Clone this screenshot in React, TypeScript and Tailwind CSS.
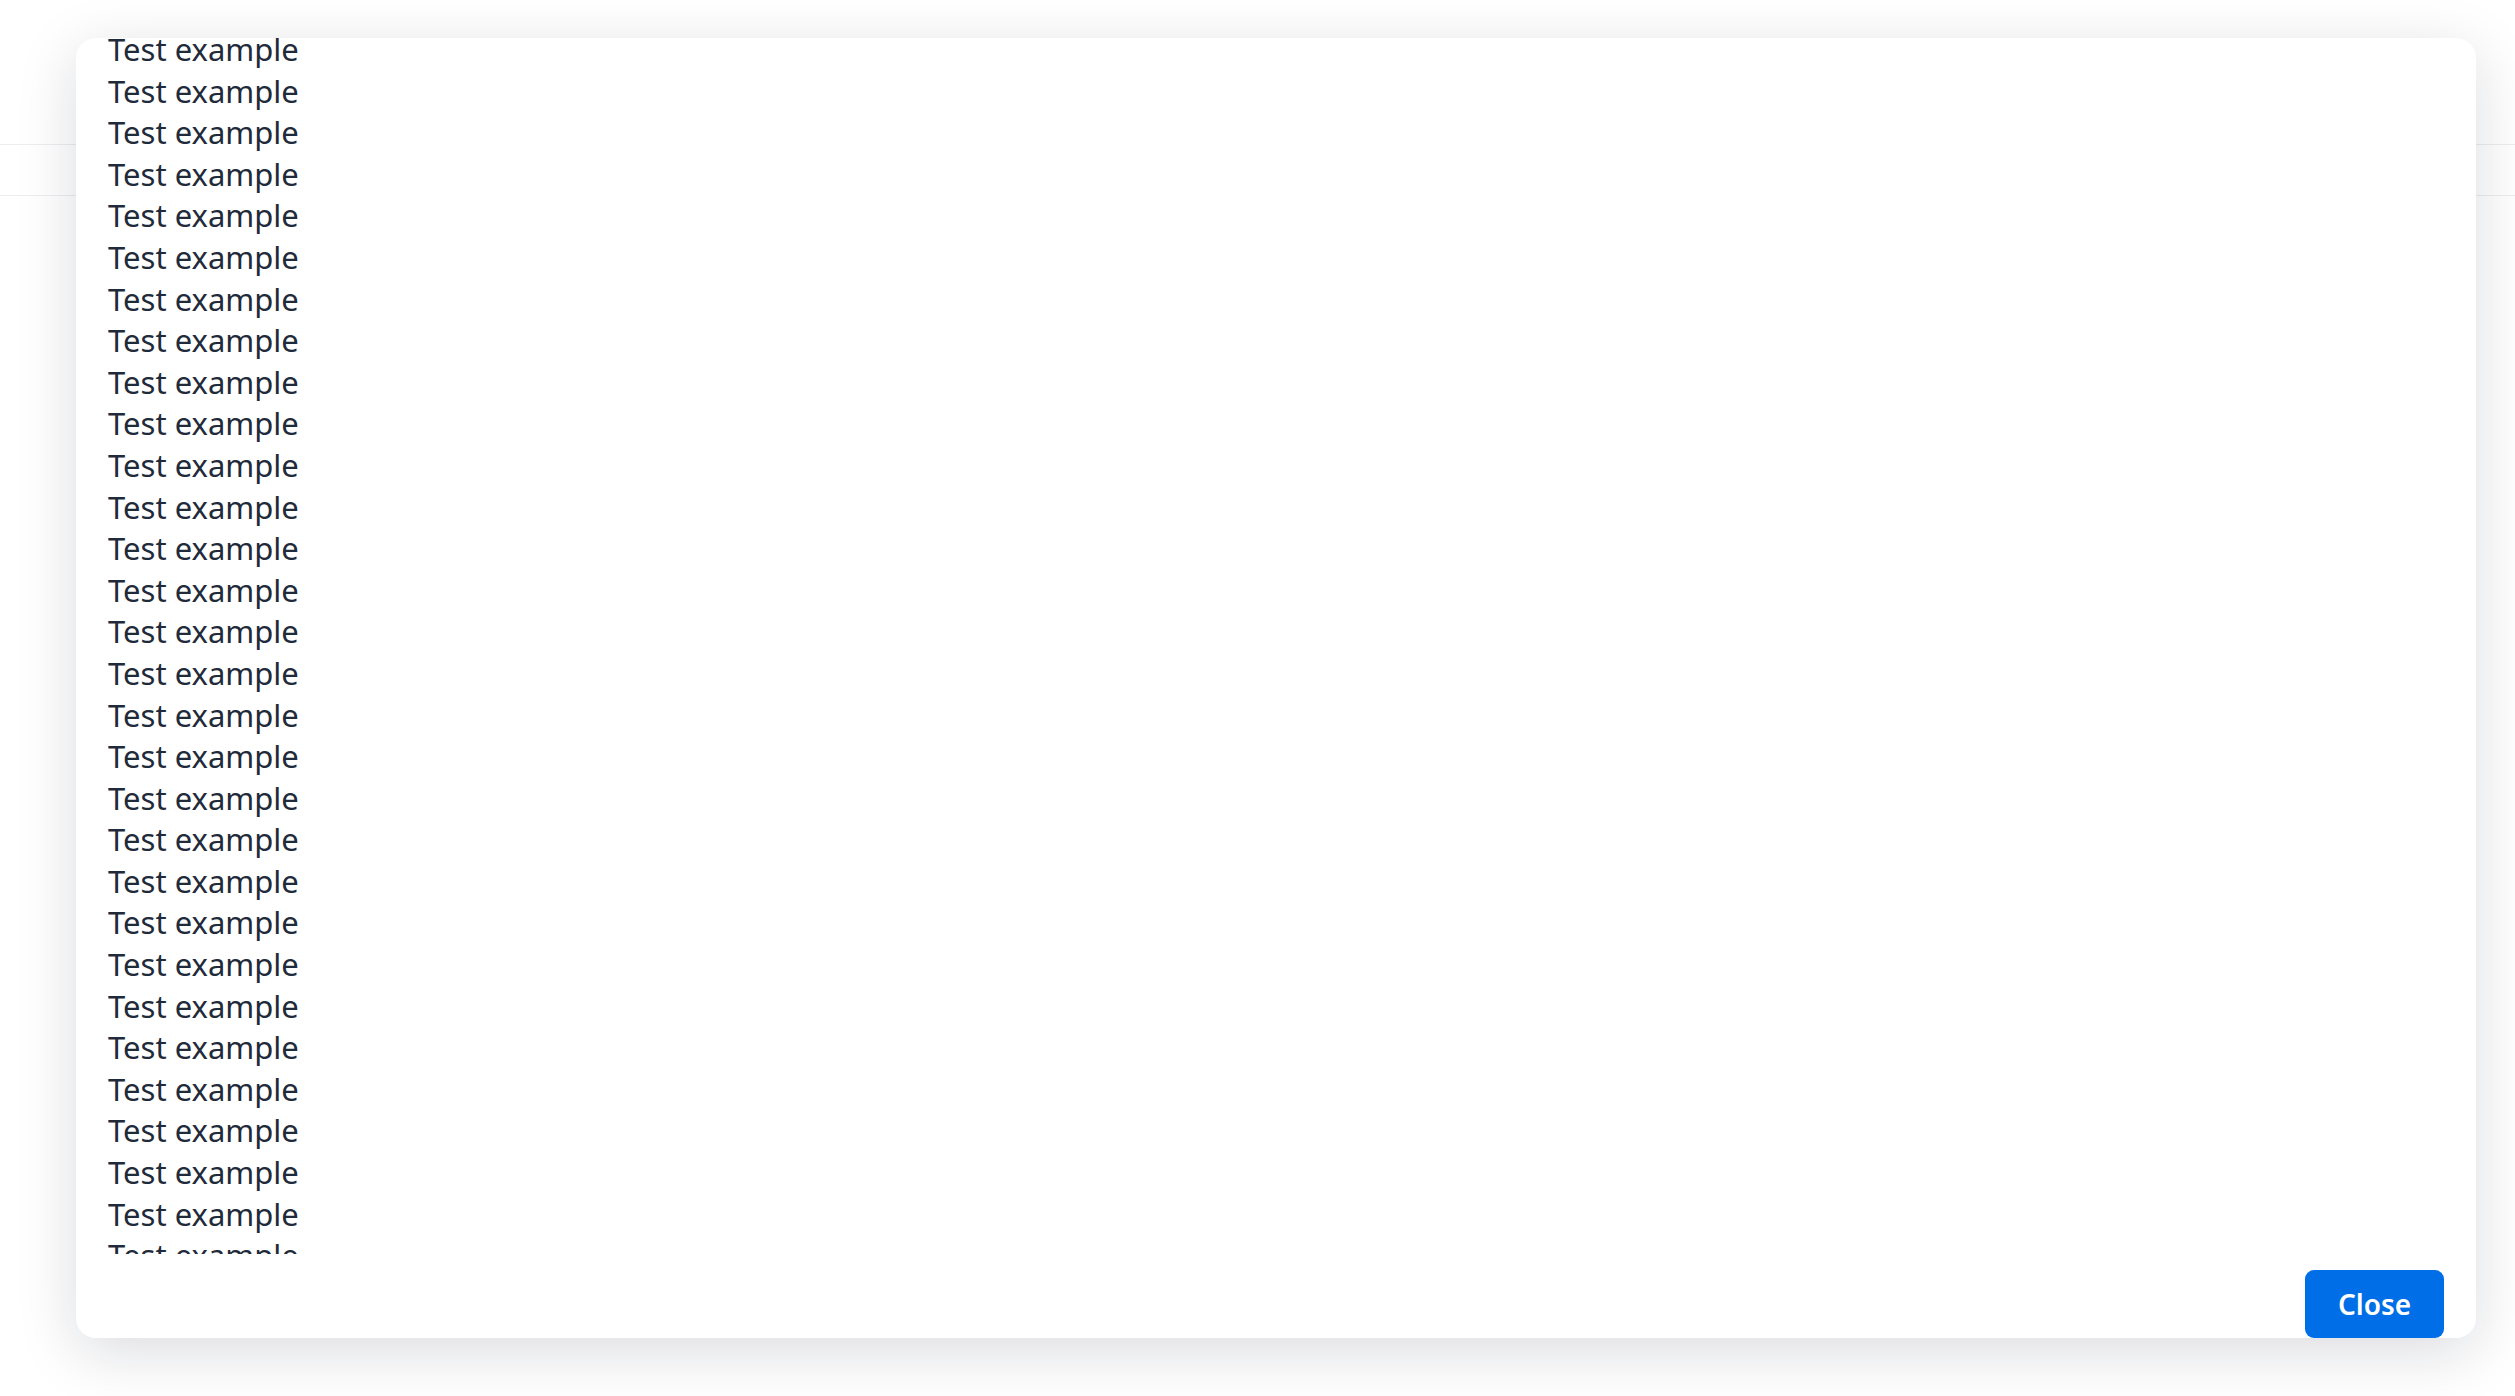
import React, { useEffect, useRef } from "react";

export default function App() {
  const scrollRef = useRef<HTMLDivElement>(null);
  useEffect(() => {
    if (scrollRef.current) scrollRef.current.scrollTop = 9;
  }, []);
  const lines = Array.from({ length: 40 }, (_, i) => i);
  return (
    <div
      className="relative h-[1396px] w-full overflow-hidden bg-white"
      style={{ fontFamily: '"Noto Sans", "Open Sans", sans-serif' }}
    >
      {/* page behind the dialog */}
      <div className="h-[145px] border-b border-[#eceef0]" />
      <div className="h-[51px] border-b border-[#eceef0]" />

      {/* dialog */}
      <div className="absolute inset-0 pl-[76px] pt-[38px]">
        <div className="flex h-[1300px] w-[2400px] flex-col rounded-[20px] bg-white shadow-[0_14px_60px_rgba(15,23,42,0.15)]">
          <div
            ref={scrollRef}
            className="h-[1216px] overflow-y-auto px-[32px] [scrollbar-width:none]"
          >
            {lines.map((i) => (
              <div
                key={i}
                className="text-[31px] leading-[41.6px] text-[#1f2b3a]"
              >
                Test example
              </div>
            ))}
          </div>
          <div className="flex flex-1 items-end justify-end px-[32px]">
            <button className="h-[68px] w-[139px] rounded-[9px] bg-[#006ee6] text-[28px] font-semibold text-white">
              Close
            </button>
          </div>
        </div>
      </div>
    </div>
  );
}
